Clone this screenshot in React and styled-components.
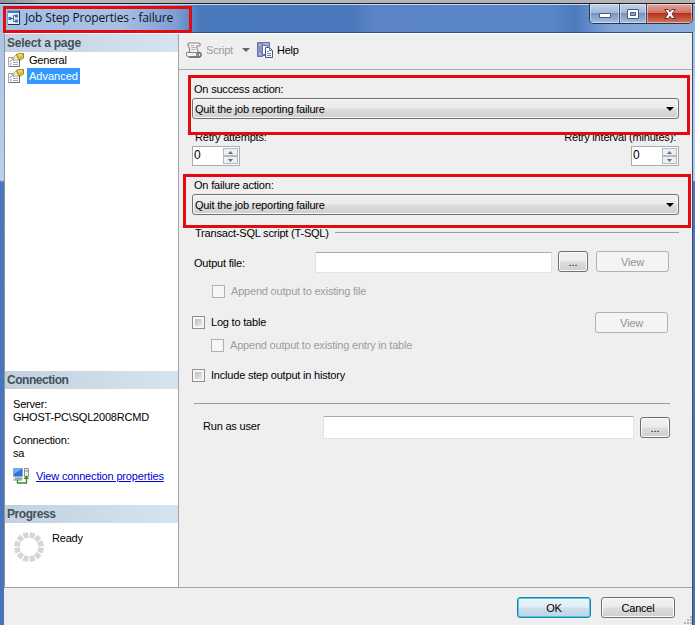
import React from 'react'
import styled, { createGlobalStyle, css } from 'styled-components';

const GlobalStyle = createGlobalStyle`
  * { box-sizing: border-box; }
  body { margin: 0; background: #efefef; overflow: hidden; }
  button, input { font: inherit; letter-spacing: inherit; }
`

function Combo({ value }) {
    return (
        <ComboBox>
            <span>{value}</span>
            <svg width="8" height="4"><path d="M0 0h8L4 4z" fill="#000" /></svg>
        </ComboBox>
    )
}

function Spinner({ value }) {
    return (
        <SpinBox>
            <SpinValue>{value}</SpinValue>
            <SpinArrows>
                <SpinArrow><svg width="5" height="3"><path d="M0 3h5L2.5 0z" fill="#5d6b99" /></svg></SpinArrow>
                <SpinArrow><svg width="5" height="3"><path d="M0 0h5L2.5 3z" fill="#5d6b99" /></svg></SpinArrow>
            </SpinArrows>
        </SpinBox>
    )
}

function Check({ label, disabled }) {
    return (
        <CheckLabel $disabled={disabled}>
            <CheckSquare $disabled={disabled} />
            {label}
        </CheckLabel>
    )
}

function PageIcon() {
    return (
        <svg width="16" height="14" viewBox="0 0 16 14">
            <path d="M.5 4.500h11v9H.5z" fill="#fff" stroke="#a5a5ad" />
            <path d="M1 13.500h10.500V7" fill="none" stroke="#6c6c76" />
            <path d="M2 8h1.500M2 11h1.500" stroke="#3a5aa0" strokeWidth="1.2" />
            <path d="M5 9.500h5M5 11.500h5" stroke="#a9a9b4" />
            <path d="M3.500 5.500L6 4l2.500-2.500h2.500v5L9 7.500 7.500 6.500 6 8 5 7l1-1.500-2 1z" fill="#f6efc4" stroke="#8a8050" strokeWidth=".7" />
            <path d="M8.500 1.500l2-1.100h5v4.500l-3 2.100-2.500-1.500z" fill="#e4c22c" stroke="#6e5c1c" strokeWidth=".7" />
            <path d="M10 2h4" stroke="#fbeb8c" />
        </svg>
    )
}

function AppIcon() {
    return (
        <svg width="13" height="15" viewBox="0 0 13 15">
            <path d="M.5.5h12v14H.5z" fill="#e9f1fb" stroke="#7f9cca" />
            <path d="M1 1h11v2H1z" fill="#4377c2" />
            <path d="M12.5 1v13.500H1" fill="none" stroke="#222c46" />
            <path d="M4 8.500h2.500M8 5.500H6.500v6H8" fill="none" stroke="#4a6ca8" />
            <path d="M1.500 7h3v3h-3zM8 4.500h3v3H8zM8 9.500h3v3H8z" fill="#3d72c4" />
        </svg>
    )
}

function ScriptIcon() {
    return (
        <svg width="16" height="16" viewBox="0 0 16 16" fill="none" stroke="#858585" strokeWidth="1.1">
            <path d="M3 1h9.500c2 0 2.500 3 .5 3h-2c-1.500 1.500 1.500 4 1 6.500" fill="#f7f7f7" />
            <path d="M3 1c-2 1.500-1 3 0 4.500s1 3 0 5H1c-1.500 2 0 4.500 2 4.500h9c-2-1-2-3.500-.5-4.500H3" fill="#f3f3f3" />
            <path d="M4.500 3.500h4M5.500 5.500h4M5.500 7.500h4" stroke="#b0b0b0" />
            <path d="M3 15h10c2.500 0 3-4 .5-4.500-2 .5-2 2.500-.5 3" stroke="#666" strokeWidth="1.4" />
        </svg>
    )
}

function HelpIcon() {
    return (
        <svg width="16" height="16" viewBox="0 0 16 16">
            <path d="M.5.500h5v14h-5z" fill="#8c91c0" stroke="#6a6fa5" />
            <path d="M5.500.500h7v13h-7z" fill="#a9aed6" stroke="#6a6fa5" />
            <path d="M2 3h2M2 12h2" stroke="#d5d8ef" />
            <path d="M5.500 3.500h5v9h-5z" fill="#fff" stroke="#6074a8" />
            <path d="M8.500 5.500h4l3 3v7h-7z" fill="#fff" stroke="#405a94" />
            <path d="M12.500 5.500v3h3M10 9.500h2M10 11.500h4M10 13.500h4" fill="none" stroke="#6a82b8" />
        </svg>
    )
}

function ConnectionIcon() {
    return (
        <svg width="16" height="16" viewBox="0 0 16 16">
            <path d="M.5.500h9v8h-9z" fill="#2e72d8" stroke="#8ca5cc" />
            <path d="M1 1h8L1 6z" fill="#6eabf4" />
            <path d="M2 10h7v1H2zM0 12h9" fill="#9aa7bb" stroke="#8893a5" />
            <path d="M11.500.500h4v8h-4z" fill="#eee" stroke="#8f8f8f" />
            <path d="M12 3h3" stroke="#888" />
            <path d="M4.500 12v3h9V8" fill="none" stroke="#3d8b2c" strokeWidth="1.4" />
            <path d="M10.500 11l3-3.500 2.500 3.500z" fill="#3d8b2c" />
        </svg>
    )
}

function ProgressRing() {
    return (
        <svg width="30" height="30" viewBox="-15 -15 30 30">
            {[...Array(12)].map((_, i) => (
                <path key={i} d="M-2.800-14.800h5.600l-.6 5.600h-4.400z" fill="#d6d6d6" transform={`rotate(${i * 30 + 15})`} />
            ))}
        </svg>
    )
}

function TitleBar() {
    return (
        <TitleRow>
            <Title><AppIcon /><span>Job Step Properties - failure</span></Title>
            <Controls>
                <Control $width={29} $drop={4}>
                    <svg width="12" height="5"><path d="M.5.500h11v4H.5z" fill="#fff" stroke="#4d5a75" /></svg>
                </Control>
                <Control $width={27}>
                    <svg width="12" height="10">
                        <path d="M.5.500h11v9H.5z" fill="#fff" stroke="#4d5a75" />
                        <path d="M3.500 3.500h5v3h-5z" fill="#8ea3c8" stroke="#4d5a75" />
                    </svg>
                </Control>
                <Control $width={46} $close>
                    <svg width="12" height="10" viewBox="0 0 12 10">
                        <path d="M.8.500h3.400L6 2.700 7.800.500h3.400L8 5l3.200 4.500H7.800L6 7.300 4.200 9.500H.8L4 5z" fill="#fff" stroke="#5e3436" />
                    </svg>
                </Control>
            </Controls>
        </TitleRow>
    )
}

function Sidebar() {
    return (
        <Side>
            <SideHeader $spacing="-0.22px">Select a page</SideHeader>
            <PageList>
                <PageItem><PageIcon /><PageName>General</PageName></PageItem>
                <PageItem><PageIcon /><PageName $selected>Advanced</PageName></PageItem>
            </PageList>
            <SideHeader>Connection</SideHeader>
            <ConnectionInfo>
                <div>Server:</div>
                <div>GHOST-PC\SQL2008RCMD</div>
                <Gap />
                <div>Connection:</div>
                <div>sa</div>
                <LinkRow><ConnectionIcon /><Link>View connection properties</Link></LinkRow>
            </ConnectionInfo>
            <SideHeader>Progress</SideHeader>
            <ProgressInfo><ProgressRing /><span>Ready</span></ProgressInfo>
        </Side>
    )
}

function Toolbar() {
    return (
        <Tools>
            <ScriptIcon />
            <ToolText $disabled>Script</ToolText>
            <DropArrow width="8" height="4"><path d="M0 0h8L4 4z" fill="#666" /></DropArrow>
            <HelpIcon />
            <ToolText>Help</ToolText>
        </Tools>
    )
}

function AdvancedPage() {
    return (
        <Form>
            <FieldLabel>On success action:</FieldLabel>
            <Combo value="Quit the job reporting failure" />
            <RetryRow>
                <div>
                    <RetryLabel>Retry attempts:</RetryLabel>
                    <Spinner value="0" />
                </div>
                <RetryRight>
                    <RetryLabel>Retry interval (minutes):</RetryLabel>
                    <Spinner value="0" />
                </RetryRight>
            </RetryRow>
            <FieldLabel>On failure action:</FieldLabel>
            <Combo value="Quit the job reporting failure" />
            <GroupTitle>Transact-SQL script (T-SQL)<GroupLine /></GroupTitle>
            <Row $height={23} $top={11} $left={2}>
                <OutputLabel>Output file:</OutputLabel>
                <TextInput $width={237} $height={21} />
                <Button $width={30} $gap={6} $lift={2}><Dots>...</Dots></Button>
                <Button $width={73} $gap={8} $lift={2} disabled>View</Button>
            </Row>
            <Row $height={15} $top={10} $left={20}>
                <Check label="Append output to existing file" disabled />
            </Row>
            <Row $height={21} $top={13}>
                <Check label="Log to table" />
                <Spacer />
                <Button $width={73} $right={11} disabled>View</Button>
            </Row>
            <Row $height={15} $top={5} $left={19}>
                <Check label="Append output to existing entry in table" disabled />
            </Row>
            <Row $height={15} $top={15}>
                <Check label="Include step output in history" />
            </Row>
            <Divider />
            <Row $height={23} $top={12} $left={11}>
                <RunLabel>Run as user</RunLabel>
                <TextInput $width={311} $height={23} />
                <Button $width={30} $gap={6}><Dots>...</Dots></Button>
            </Row>
        </Form>
    )
}

function App() {
    return (
        <Screen>
            <GlobalStyle />
            <Behind />
            <Window>
                <TitleBar />
                <Client>
                    <Body>
                        <Sidebar />
                        <Content>
                            <Toolbar />
                            <AdvancedPage />
                        </Content>
                    </Body>
                    <Footer>
                        <Button $width={74} $primary>OK</Button>
                        <Button $width={74} $gap={10}>Cancel</Button>
                        <Grip width="10" height="9">
                            {[[8, 0], [5, 3], [8, 3], [2, 6], [5, 6], [8, 6]].map(([x, y]) => (
                                <rect key={`${x}-${y}`} x={x} y={y} width="2" height="2" fill="#b5b5b5" />
                            ))}
                        </Grip>
                    </Footer>
                </Client>
            </Window>
            <Highlight $x={3} $y={6} $w={189} $h={27} />
            <Highlight $x={188} $y={75} $w={502} $h={60} />
            <Highlight $x={183} $y={174} $w={508} $h={54} />
        </Screen>
    )
}

export default App

const Screen = styled.div`
position:relative;
width:695px;
height:625px;
overflow:hidden;
display:flex;
flex-direction:column;
font:11px/13px "Liberation Sans", Arial, sans-serif;
letter-spacing:-0.2px;
color:#000;
white-space:nowrap;
`

const Behind = styled.div`
height:3px;
flex:none;
background:linear-gradient(90deg,#8b93a0,#a9abaf 38px,#b9b7b4 40px,#b5b3b0);
`

const Window = styled.div`
flex:1;
min-height:0;
display:flex;
flex-direction:column;
border-top:1px solid #15202f;
background:linear-gradient(#a9c2e6,#bccfe9 176px,#4a77bd 178px,#4673ba);
`

const TitleRow = styled.div`
height:28px;
flex:none;
display:flex;
justify-content:space-between;
border-top:1px solid #c7dcf4;
background:linear-gradient(90deg,#a4bfe5 0,#a7c0e4 120px,#7f9fd3 175px,#4b79be 200px,#4a77bc 350px,#5a84c6 375px,#5a86ca 550px,#4d79bd 575px,#7fa3d6 610px,#8fafdc 695px);
`

const Title = styled.div`
display:flex;
align-items:center;
padding:0 0 2px 7px;
gap:5px;
font:12px/16px "Open Sans", "Noto Sans", sans-serif;
letter-spacing:-0.17px;
color:#10151f;
`

const Controls = styled.div`
display:flex;
height:20px;
margin:-1px 2px 0 0;
border:1px solid #26344f;
border-top:0;
border-radius:0 0 5px 5px;
overflow:hidden;
`

const Control = styled.div`
width:${({ $width }) => $width}px;
padding-top:${({ $drop }) => $drop || 0}px;
display:flex;
align-items:center;
justify-content:center;
background:linear-gradient(#c5d3e8,#a2b8d9 45%,#7792be 50%,#a6c0e2);
box-shadow:inset 0 0 0 1px rgba(255,255,255,.45);
& + & { border-left:1px solid #34476a; }
${({ $close }) => $close && css`
background:linear-gradient(#e3a99f,#cf7363 45%,#b8301c 50%,#d5765b);
`}
`

const Client = styled.div`
flex:1;
min-height:0;
margin:0 2px 0 4px;
border:solid #34507e;
border-width:1px 1px 0 0;
background:#efefef;
display:flex;
flex-direction:column;
`

const Body = styled.div`
height:555px;
flex:none;
display:flex;
border-top:1px solid #fff;
border-left:1px solid #8b949f;
border-bottom:1px solid #a0a4aa;
`

const Side = styled.div`
width:174px;
flex:none;
background:#fff;
border-right:1px solid #a0a4aa;
`

const SideHeader = styled.div`
height:18px;
padding:2px 0 0 2px;
background:linear-gradient(90deg,#c3d1df,#d6e3f0);
color:#42515c;
font-size:12px;
line-height:14px;
font-weight:bold;
letter-spacing:${({ $spacing }) => $spacing || '-0.45px'};
`

const PageList = styled.div`
height:319px;
`

const PageItem = styled.div`
height:16px;
padding-left:3px;
display:flex;
align-items:center;
gap:3px;
`

const PageName = styled.span`
height:16px;
padding:0 2px;
line-height:16px;
${({ $selected }) => $selected && css`
background:#3399ff;
color:#fff;
letter-spacing:0;
`}
`

const ConnectionInfo = styled.div`
height:116px;
padding:9px 0 0 8px;
`

const Gap = styled.div`
height:10px;
`

const LinkRow = styled.div`
display:flex;
align-items:center;
gap:7px;
margin-top:8px;
`

const Link = styled.a`
color:#0000d8;
text-decoration:underline;
letter-spacing:-0.16px;
`

const ProgressInfo = styled.div`
display:flex;
padding:9px 0 0 9px;
gap:8px;
`

const Content = styled.div`
flex:1;
min-width:0;
display:flex;
flex-direction:column;
`

const Tools = styled.div`
height:36px;
flex:none;
border-bottom:1px solid #a3adb8;
padding:0 0 3px 7px;
display:flex;
align-items:center;
`

const ToolText = styled.span`
margin-left:4px;
color:${({ $disabled }) => ($disabled ? '#9b9b9b' : '#000')};
`

const DropArrow = styled.svg`
margin:0 7px 0 9px;
`

const Form = styled.div`
padding:13px 13px 0 13px;
`

const FieldLabel = styled.div`
height:15px;
padding-left:2px;
`

const ComboBox = styled.div`
height:21px;
display:flex;
align-items:center;
justify-content:space-between;
padding:1px 4px 0 2px;
border:1px solid #707070;
border-radius:3px;
background:linear-gradient(#f2f2f2,#ebebeb 48%,#dddddd 52%,#cfcfcf);
box-shadow:inset 0 0 0 1px #f8f8f8;
`

const RetryRow = styled.div`
display:flex;
justify-content:space-between;
height:60px;
padding-top:12px;
`

const RetryRight = styled.div`
display:flex;
flex-direction:column;
align-items:flex-end;
`

const RetryLabel = styled.div`
height:15px;
padding:0 3px;
`

const SpinBox = styled.div`
width:48px;
height:20px;
display:flex;
justify-content:space-between;
border:1px solid #a5acb5;
background:#fff;
`

const SpinValue = styled.span`
padding-left:1px;
font-size:12px;
line-height:16px;
`

const SpinArrows = styled.div`
width:15px;
margin:1px 1px 1px 0;
display:flex;
flex-direction:column;
`

const SpinArrow = styled.div`
flex:1;
display:flex;
align-items:center;
justify-content:center;
border:1px solid #b4b8c0;
background:#efefef;
`

const GroupTitle = styled.div`
display:flex;
align-items:center;
height:13px;
margin-top:12px;
padding-left:3px;
`

const GroupLine = styled.div`
flex:1;
height:1px;
margin:0 0 2px 6px;
background:#9a9ea8;
`

const Row = styled.div`
display:flex;
align-items:center;
height:${({ $height }) => $height}px;
margin-top:${({ $top }) => $top}px;
padding-left:${({ $left }) => $left || 0}px;
`

const OutputLabel = styled.span`
width:121px;
padding-top:2px;
`

const RunLabel = styled.span`
width:120px;
padding-bottom:3px;
`

const TextInput = styled.input`
width:${({ $width }) => $width}px;
height:${({ $height }) => $height}px;
padding:0 3px;
border:1px solid #e0e3e7;
border-top-color:#a9acb2;
background:#fff;
outline:none;
`

const Spacer = styled.div`
flex:1;
`

const Button = styled.button`
width:${({ $width }) => $width}px;
height:21px;
flex:none;
margin:0 ${({ $right }) => $right || 0}px ${({ $lift }) => $lift || 0}px ${({ $gap }) => $gap || 0}px;
padding:2px 0 0;
border:1px solid #707070;
border-radius:3px;
color:#000;
line-height:17px;
background:linear-gradient(#f2f2f2,#ebebeb 48%,#dddddd 52%,#cfcfcf);
box-shadow:inset 0 0 0 1px #fafafa;
${({ $primary }) => $primary && css`
border-color:#2c7fa8;
background:linear-gradient(#eef5f9,#e1edf4 48%,#cddfea 52%,#bcd5e3);
box-shadow:inset 0 0 0 1px #48c8ee;
`}
&:disabled {
border-color:#adb2b5;
background:#f4f4f4;
color:#929292;
box-shadow:none;
}
`

const Dots = styled.span`
display:block;
letter-spacing:0;
`

const CheckLabel = styled.label`
display:flex;
align-items:center;
gap:6px;
padding-bottom:${({ $disabled }) => ($disabled ? 0 : 1)}px;
color:${({ $disabled }) => ($disabled ? '#9d9d9d' : '#000')};
`

const CheckSquare = styled.span`
width:13px;
height:13px;
border:1px solid ${({ $disabled }) => ($disabled ? '#b1b1b1' : '#8e8f8f')};
background:${({ $disabled }) => ($disabled ? '#f7f7f7' : 'linear-gradient(135deg,#aeb3b9,#f4f4f4)')};
box-shadow:inset 0 0 0 2px #f6f6f6;
`

const Divider = styled.div`
height:1px;
margin:20px 9px 0 2px;
background:#9c9c9c;
`

const Footer = styled.div`
flex:1;
display:flex;
align-items:flex-start;
justify-content:flex-end;
padding:9px 0 0;
`

const Grip = styled.svg`
align-self:flex-end;
margin-left:7px;
`

const Highlight = styled.div`
position:absolute;
left:${({ $x }) => $x}px;
top:${({ $y }) => $y}px;
width:${({ $w }) => $w}px;
height:${({ $h }) => $h}px;
border:3px solid #e30b0f;
pointer-events:none;
`
